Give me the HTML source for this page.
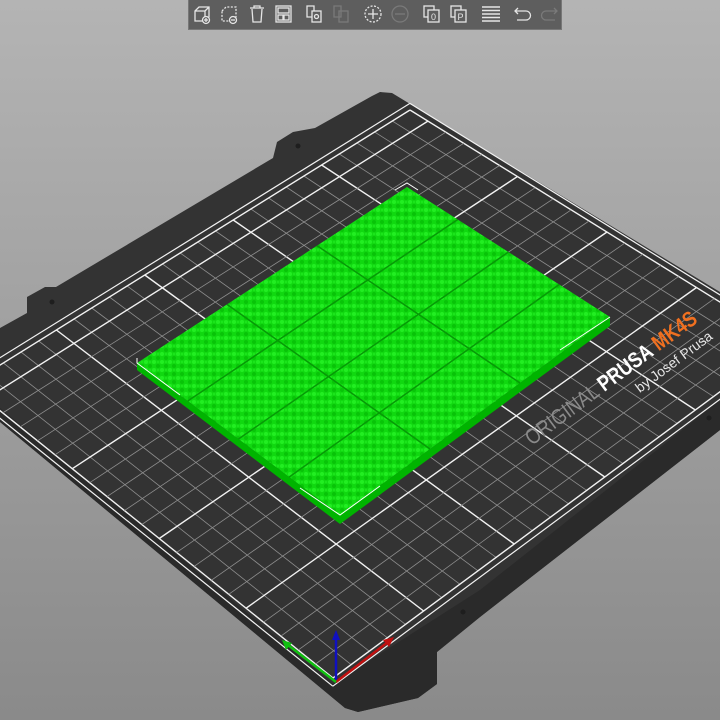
<!DOCTYPE html>
<html><head><meta charset="utf-8"><style>
html,body{margin:0;padding:0;width:720px;height:720px;overflow:hidden;}
body{background:linear-gradient(#b4b4b4,#8a8a8a);font-family:"Liberation Sans",sans-serif;}
#tb{position:absolute;left:188px;top:0;width:374px;height:30px;background:#5e5e5e;border:1px solid #777;border-top:none;box-sizing:border-box;}
</style></head><body>
<svg width="720" height="720" style="position:absolute;left:0;top:0">
<defs>
<pattern id="tex" width="8" height="8" patternUnits="userSpaceOnUse">
<rect width="8" height="8" fill="#10d810"/>
<circle cx="2" cy="2" r="2" fill="#22ee22"/><circle cx="6" cy="6" r="2" fill="#08c408"/>
<circle cx="6" cy="2" r="1.3" fill="#1be41b"/>
</pattern>
</defs>
<polygon fill="#333333" points="372,96 380,92 392,93 720,292 720,430 480,617 437,652 437,684 418,698 358,712 345,708 0,422 0,328 27,313 27,297 45,287 56,287 273,158 277,142 293,132 315,128"/>
<polygon fill="#2a2a2a" points="720,400 720,430 480,617 437,652 437,684 418,698 358,712 345,708 0,422 0,408 333,684 480,590"/>
<circle cx="298" cy="146" r="2.5" fill="#1e1e1e"/><circle cx="52" cy="302" r="2.5" fill="#1e1e1e"/>
<circle cx="709" cy="418" r="2.5" fill="#1e1e1e"/><circle cx="463" cy="612" r="2.5" fill="#1e1e1e"/>
<g id="grid"></g>
<g transform="translate(532,446) rotate(-36.7)">
<text x="0" y="0" font-size="22" fill="#8a8a8a" font-family="Liberation Sans" textLength="208" lengthAdjust="spacingAndGlyphs">ORIGINAL <tspan fill="#fff" font-weight="bold">PRUSA</tspan> <tspan fill="#f07020" font-weight="bold">MK4S</tspan></text>
<text x="118" y="22" font-size="14" fill="#e6e6e6" textLength="92" lengthAdjust="spacingAndGlyphs">by Josef Prusa</text>
</g>
<polygon fill="#00b400" points="137,363 340,515 610,317 610,326 340,524 137,370"/>
<polygon fill="url(#tex)" points="407,187 137,363 340,515 610,317"/>
<g id="seams" stroke="#079a07" stroke-width="1.5" fill="none"></g>
<polyline points="137,358 137,363 180,395" stroke="#fff" stroke-width="1" fill="none"/>
<polyline points="300,488 340,515 380,486" stroke="#fff" stroke-width="1" fill="none"/>
<polyline points="560,350 610,317" stroke="#fff" stroke-width="1" fill="none"/>
<polyline points="395,190 407,183 418,190" stroke="#fff" stroke-width="1" fill="none"/>
<line x1="336" y1="682" x2="336" y2="638" stroke="#1010c0" stroke-width="2.5"/>
<polygon points="336,630 332,640 340,640" fill="#1010c0"/>
<line x1="336" y1="682" x2="388" y2="642" stroke="#c01010" stroke-width="2.5"/>
<polygon points="394,637 383,640 389,647" fill="#c01010"/>
<line x1="336" y1="682" x2="288" y2="645" stroke="#10c010" stroke-width="2.5"/>
<polygon points="282,640 286,650 292,643" fill="#10c010"/>
</svg>
<div id="tb">
<svg width="374" height="30" style="position:absolute;left:-1px;top:0" fill="none" stroke="#e6e6e6" stroke-width="1.3">
<g transform="translate(6,6)"><path d="M1 5 L5 1 H15 V11 L11 15 H1 Z M1 5 H11 V15 M11 5 L15 1"/><circle cx="12" cy="14" r="3.5" fill="#5e5e5e"/><path d="M12 12 V16 M10 14 H14"/></g>
<g transform="translate(33,6)"><path d="M1 5 L5 1 H15 V11 L11 15 H1 Z" stroke-dasharray="2 1.5"/><circle cx="12" cy="14" r="3.5" fill="#5e5e5e"/><path d="M10 14 H14"/></g>
<g transform="translate(61,5)"><path d="M1 3 H15 M5 3 V1 H11 V3 M3 4 L4 17 H12 L13 4"/></g>
<g transform="translate(87,5)"><rect x="1" y="1" width="15" height="16"/><rect x="3" y="3" width="11" height="5"/><rect x="3" y="10" width="5" height="5"/><rect x="9" y="10" width="5" height="5"/></g>
<g transform="translate(118,5)"><path d="M1 1 H8 V12 H1 Z"/><rect x="6" y="6" width="9" height="11" fill="#5e5e5e"/><circle cx="10.5" cy="11.5" r="2"/></g>
<g transform="translate(145,5)" stroke="#7a7a7a"><path d="M1 1 H8 V12 H1 Z"/><rect x="6" y="6" width="9" height="11"/></g>
<g transform="translate(177,6)"><circle cx="8" cy="8" r="8" stroke-dasharray="2 1.5"/><path d="M8 3 V13 M3 8 H13"/></g>
<g transform="translate(204,6)" stroke="#7a7a7a"><circle cx="8" cy="8" r="8"/><path d="M3 8 H13"/></g>
<g transform="translate(235,5)"><rect x="1" y="1" width="10" height="11"/><rect x="5" y="5" width="11" height="12" fill="#5e5e5e"/><text x="8" y="15" font-size="9" fill="#e6e6e6" stroke="none" font-family="Liberation Sans">0</text></g>
<g transform="translate(262,5)"><rect x="1" y="1" width="10" height="11"/><rect x="5" y="5" width="11" height="12" fill="#5e5e5e"/><text x="7.5" y="15" font-size="9" fill="#e6e6e6" stroke="none" font-family="Liberation Sans">P</text></g>
<g transform="translate(294,6)" stroke-width="1.6"><path d="M0 1 H18 M0 4.5 H18 M0 8 H18 M0 11.5 H18 M0 15 H18"/></g>
<g transform="translate(326,7)"><path d="M4 1 L1 4 L4 7 M1 4 H12 A4 4 0 0 1 12 13 H3"/></g>
<g transform="translate(352,7)" stroke="#7a7a7a"><path d="M14 1 L17 4 L14 7 M17 4 H6 A4 4 0 0 0 6 13 H15"/></g>
</svg>
</div>
<script>
(function(){
var B=[333,678],R=[786,343],L=[-32,385],T=[410,110];
function P(u,v){
 var a=u/250,b=v/210;
 return [(1-a)*(1-b)*B[0]+a*(1-b)*R[0]+(1-a)*b*L[0]+a*b*T[0],(1-a)*(1-b)*B[1]+a*(1-b)*R[1]+(1-a)*b*L[1]+a*b*T[1]];}
var s='';
function ln(p,q,c,w){s+='<line x1="'+p[0].toFixed(1)+'" y1="'+p[1].toFixed(1)+'" x2="'+q[0].toFixed(1)+'" y2="'+q[1].toFixed(1)+'" stroke="'+c+'" stroke-width="'+w+'"/>';}
for(var x=0;x<=250;x+=10){var th=(x%50==0);ln(P(x,0),P(x,210),th?'#f2f2f2':'#8e8e8e',th?1.4:0.8);}
for(var y=0;y<=210;y+=10){var th=(y%50==0||y==210);ln(P(0,y),P(250,y),th?'#f2f2f2':'#8e8e8e',th?1.4:0.8);}
ln(P(-3,-3),P(253,-3),'#f2f2f2',1.2);ln(P(-3,213),P(253,213),'#f2f2f2',1.2);
ln(P(-3,-3),P(-3,213),'#f2f2f2',1.2);ln(P(253,-3),P(253,213),'#f2f2f2',1.2);
document.getElementById('grid').innerHTML=s;
var oT=[407,187],oL=[137,363],oB=[340,515],oR=[610,317];
function Q(a,b){return [(1-a)*(1-b)*oB[0]+a*(1-b)*oR[0]+(1-a)*b*oL[0]+a*b*oT[0],(1-a)*(1-b)*oB[1]+a*(1-b)*oR[1]+(1-a)*b*oL[1]+a*b*oT[1]];}
var t='';
function l2(p,q){t+='<line x1="'+p[0]+'" y1="'+p[1]+'" x2="'+q[0]+'" y2="'+q[1]+'"/>';}
for(var i=1;i<3;i++)l2(Q(i/3,0),Q(i/3,1));
for(var j=1;j<4;j++)l2(Q(0,j/4),Q(1,j/4));
document.getElementById('seams').innerHTML=t;
})();
</script>
</body></html>
